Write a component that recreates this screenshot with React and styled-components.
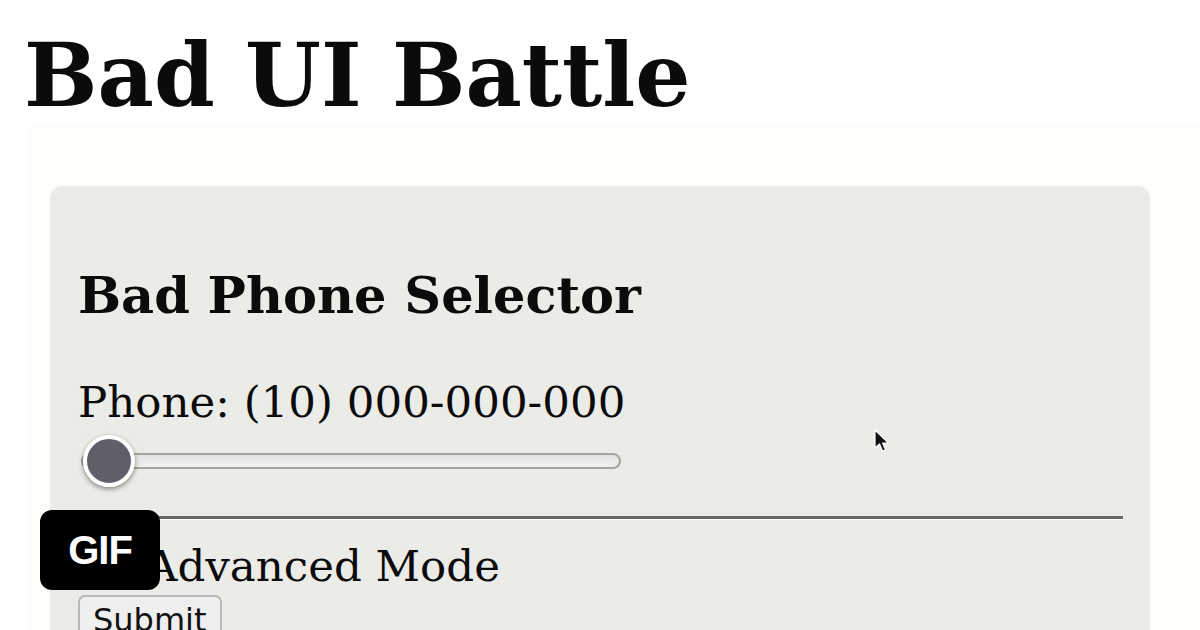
import React, { useState } from 'react';
import styled, { createGlobalStyle } from 'styled-components';

const GlobalStyle = createGlobalStyle`
    html, body {
        margin: 0;
        padding: 0;
        background: #ffffff;
        font-family: "DejaVu Serif", serif;
        color: #0b0b0b;
    }
`;

export const Page = styled.div`
    position: relative;
    width: 1200px;
    height: 630px;
    overflow: hidden;
`;

export const Title = styled.h1`
    margin: 0;
    padding: 25px 0 0 24px;
    height: 100px;
    font-size: 87px;
    font-weight: bold;
    line-height: 1.164;
`;

export const Stage = styled.div`
    margin-left: 28px;
    padding: 61px 50px 0 22px;
    background: #fdfdfa;
    min-height: 505px;
`;

export const Panel = styled.div`
    background: #ebebe8;
    border-radius: 12px;
    padding: 80px 27px 40px 28px;
`;

export const Heading = styled.h2`
    margin: 0;
    font-size: 51px;
    font-weight: bold;
    line-height: 1.164;
`;

export const Label = styled.p`
    margin: ${(p) => p.$top || 0}px 0 0;
    font-size: 43.5px;
    line-height: 1.164;
`;

export const Range = styled.input`
    display: block;
    -webkit-appearance: none;
    appearance: none;
    width: 540px;
    height: 52px;
    margin: 7px 0 0 3px;
    background: transparent;

    &::-webkit-slider-runnable-track {
        height: 16px;
        background: linear-gradient(#e2e2e0, #f2f2f0);
        border: 2px solid #a4a4a4;
        border-radius: 8px;
        box-sizing: border-box;
    }

    &::-webkit-slider-thumb {
        -webkit-appearance: none;
        width: 52px;
        height: 52px;
        margin-top: -20px;
        border-radius: 50%;
        background: #5f5f68;
        border: 4px solid #ffffff;
        box-sizing: border-box;
        box-shadow: 0 2px 5px rgba(0, 0, 0, 0.45);
    }
`;

export const Rule = styled.hr`
    margin: 29px 0 0;
    border: 0;
    border-top: 3px solid #666664;
    border-bottom: 1px solid #ffffff;
`;

export const CheckRow = styled.label`
    display: flex;
    align-items: center;
    gap: 12px;
    margin-top: 21px;
    font-size: 43.5px;
    line-height: 1.164;
`;

export const Check = styled.input`
    -webkit-appearance: none;
    appearance: none;
    width: 36px;
    height: 36px;
    margin: 0 0 0 20px;
    border: 2px solid #767676;
    border-radius: 5px;
    background: #ffffff;
`;

export const SubmitButton = styled.button`
    display: block;
    margin-top: 3px;
    padding: 4px 13px;
    font-family: "DejaVu Sans", sans-serif;
    font-size: 32px;
    color: #111111;
    background: #efefef;
    border: 2px solid #b9b9b9;
    border-radius: 7px;
`;

export const GifBadge = styled.div`
    position: absolute;
    left: 40px;
    top: 510px;
    width: 120px;
    height: 80px;
    display: flex;
    align-items: center;
    justify-content: center;
    background: #000000;
    border-radius: 12px;
    color: #ffffff;
    font-family: "Liberation Sans", Arial, sans-serif;
    font-weight: bold;
    font-size: 40px;
    letter-spacing: -1px;
`;

export const Pointer = styled.svg`
    position: absolute;
    left: 874px;
    top: 429px;
`;

function App() {
    const [phone, setPhone] = useState(0);
    const [advanced, setAdvanced] = useState(false);

    return (
        <Page>
            <GlobalStyle />
            <Title>Bad UI Battle</Title>
            <Stage>
                <Panel>
                    <Heading>Bad Phone Selector</Heading>
                    <Label $top={52}>Phone: (10) 000-000-000</Label>
                    <Range
                        type='range'
                        min='0'
                        max='100'
                        value={phone}
                        onChange={(e) => setPhone(Number(e.target.value))}
                    />
                    <Rule />
                    <CheckRow>
                        <Check
                            type='checkbox'
                            checked={advanced}
                            onChange={() => setAdvanced(!advanced)}
                        />
                        Advanced Mode
                    </CheckRow>
                    <SubmitButton>Submit</SubmitButton>
                </Panel>
            </Stage>
            <GifBadge>GIF</GifBadge>
            <Pointer width='18' height='26' viewBox='0 0 18 26'>
                <path
                    d='M1 1 L1 19 L5.5 15 L8.5 22 L11.5 20.8 L8.6 14 L14.5 14 Z'
                    fill='#111'
                    stroke='#fff'
                    strokeWidth='1.2'
                    strokeLinejoin='round'
                />
            </Pointer>
        </Page>
    );
}

export default App;
